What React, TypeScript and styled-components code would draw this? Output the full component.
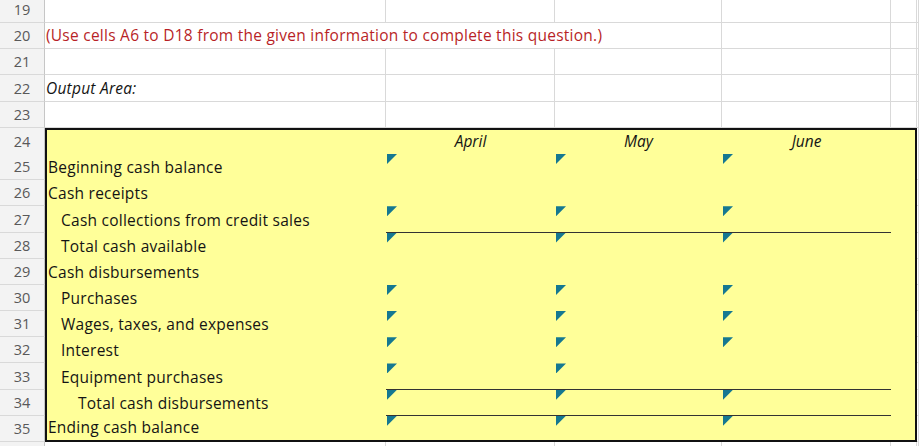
import React from 'react';
import styled, { createGlobalStyle } from 'styled-components';

const GlobalStyle = createGlobalStyle`
  html, body {
    margin: 0;
    padding: 0;
    background: #ffffff;
  }
  body {
    font-family: "Open Sans", "Liberation Sans", sans-serif;
    overflow: hidden;
  }
`;

const GRID = '#d9d9d9';
const YELLOW = '#ffff99';
const EDGE = '#111111';

const Sheet = styled.div`
  display: flex;
  flex-direction: column;
  width: 919px;
  margin-top: -3.2px;
  overflow: hidden;
`;

const Row = styled.div`
  display: grid;
  grid-template-columns: 45px 341px 169px 167px 169px 26px 1fr;
  height: 26.2px;
`;

const RowHead = styled.div`
  box-sizing: border-box;
  display: flex;
  align-items: flex-end;
  justify-content: center;
  padding-bottom: 3px;
  background: #f3f3f3;
  border-right: 1px solid #c6c6c6;
  border-bottom: 1px solid ${GRID};
  color: #595959;
  font-size: 14.5px;
`;

interface CellProps {
  $yellow?: boolean;
  $top?: boolean;
  $bottom?: boolean;
  $left?: boolean;
  $right?: boolean;
  $rule?: boolean;
  $span?: number;
}

const Cell = styled.div<CellProps>`
  box-sizing: border-box;
  display: flex;
  align-items: flex-start;
  min-width: 0;
  background: ${(p) => (p.$yellow ? YELLOW : '#ffffff')};
  grid-column: ${(p) => (p.$span ? `span ${p.$span}` : 'auto')};
  border-right: ${(p) =>
    p.$right ? `2px solid ${EDGE}` : p.$yellow ? 'none' : `1px solid ${GRID}`};
  border-bottom: ${(p) =>
    p.$bottom
      ? `2px solid ${EDGE}`
      : p.$rule
      ? '1px solid #333333'
      : p.$yellow
      ? 'none'
      : `1px solid ${GRID}`};
  border-top: ${(p) => (p.$top ? `2px solid ${EDGE}` : 'none')};
  border-left: ${(p) => (p.$left ? `2px solid ${EDGE}` : 'none')};
`;

const Text = styled.span<{ $indent?: number; $italic?: boolean; $tone?: 'red' | 'ink' }>`
  align-self: flex-end;
  padding: 0 0 2px ${(p) => 1 + (p.$indent ?? 0)}px;
  font-size: 15.5px;
  letter-spacing: 0.25px;
  font-style: ${(p) => (p.$italic ? 'italic' : 'normal')};
  color: ${(p) => (p.$tone === 'red' ? '#b81f27' : '#141414')};
  white-space: nowrap;
`;

const Month = styled.span`
  flex: 1;
  align-self: flex-end;
  padding-bottom: 3px;
  text-align: center;
  font-size: 15.5px;
  font-style: italic;
  color: #141414;
`;

const Marker = styled.span`
  display: block;
  width: 10px;
  height: 10px;
  margin: 0 0 0 1px;
  background: #157891;
  clip-path: polygon(0 0, 100% 0, 0 100%);
`;

interface LineItem {
  n: number;
  label?: string;
  indent?: number;
  marks?: [boolean, boolean, boolean];
  rule?: boolean;
}

const ALL: [boolean, boolean, boolean] = [true, true, true];

const items: LineItem[] = [
  { n: 25, label: 'Beginning cash balance', marks: ALL },
  { n: 26, label: 'Cash receipts' },
  { n: 27, label: 'Cash collections from credit sales', indent: 13, marks: ALL, rule: true },
  { n: 28, label: 'Total cash available', indent: 13, marks: ALL },
  { n: 29, label: 'Cash disbursements' },
  { n: 30, label: 'Purchases', indent: 13, marks: ALL },
  { n: 31, label: 'Wages, taxes, and expenses', indent: 13, marks: ALL },
  { n: 32, label: 'Interest', indent: 13, marks: ALL },
  { n: 33, label: 'Equipment purchases', indent: 13, marks: [true, true, false], rule: true },
  { n: 34, label: 'Total cash disbursements', indent: 30, marks: ALL, rule: true },
  { n: 35, label: 'Ending cash balance', marks: ALL },
];

const BlankRow = ({ n }: { n?: number }) => (
  <Row>
    <RowHead>{n}</RowHead>
    <Cell />
    <Cell />
    <Cell />
    <Cell />
    <Cell />
    <Cell />
  </Row>
);

export default function App() {
  return (
    <>
      <GlobalStyle />
      <Sheet>
        <BlankRow n={19} />
        <Row>
          <RowHead>20</RowHead>
          <Cell $span={3}>
            <Text $tone="red">(Use cells A6 to D18 from the given information to complete this question.)</Text>
          </Cell>
          <Cell />
          <Cell />
          <Cell />
        </Row>
        <BlankRow n={21} />
        <Row>
          <RowHead>22</RowHead>
          <Cell>
            <Text $italic>Output Area:</Text>
          </Cell>
          <Cell />
          <Cell />
          <Cell />
          <Cell />
          <Cell />
        </Row>
        <BlankRow n={23} />
        <Row>
          <RowHead>24</RowHead>
          <Cell $yellow $top $left />
          <Cell $yellow $top>
            <Month>April</Month>
          </Cell>
          <Cell $yellow $top>
            <Month>May</Month>
          </Cell>
          <Cell $yellow $top>
            <Month>June</Month>
          </Cell>
          <Cell $yellow $top $right />
          <Cell />
        </Row>
        {items.map((it, i) => {
          const last = i === items.length - 1;
          return (
            <Row key={it.n}>
              <RowHead>{it.n}</RowHead>
              <Cell $yellow $left $bottom={last}>
                <Text $indent={it.indent}>{it.label}</Text>
              </Cell>
              {[0, 1, 2].map((c) => (
                <Cell key={c} $yellow $bottom={last} $rule={it.rule}>
                  {it.marks?.[c] && <Marker />}
                </Cell>
              ))}
              <Cell $yellow $right $bottom={last} />
              <Cell />
            </Row>
          );
        })}
        <BlankRow />
      </Sheet>
    </>
  );
}
